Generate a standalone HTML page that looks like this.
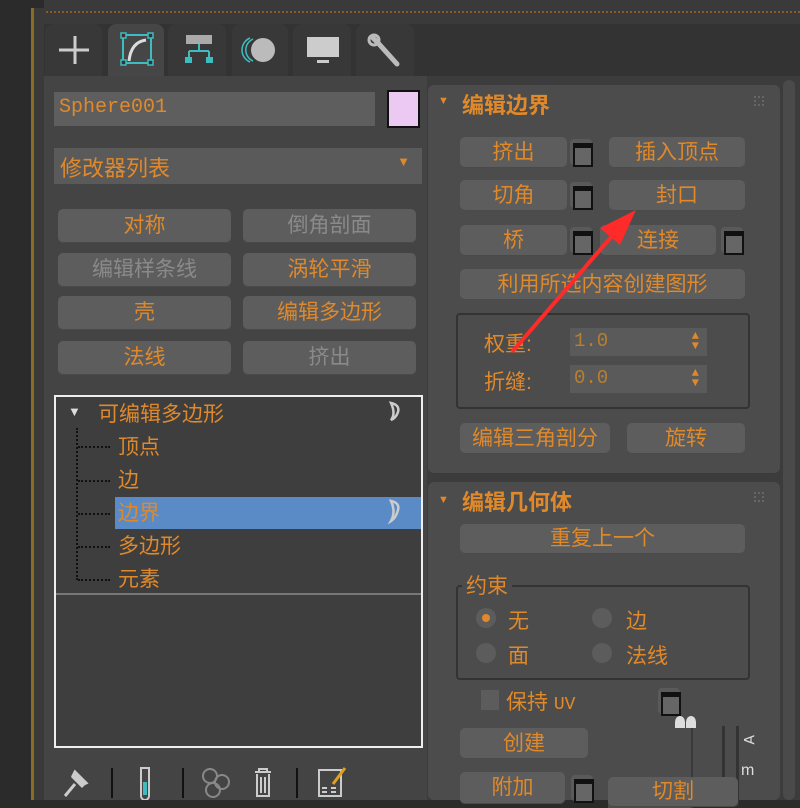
<!DOCTYPE html>
<html><head><meta charset="utf-8"><style>
*{margin:0;padding:0;box-sizing:border-box}
body{width:800px;height:800px;overflow:hidden;background:#2b2b2b;position:relative;font-family:"Liberation Sans","Noto Sans CJK SC",sans-serif;}
.a{position:absolute}
.o{color:#e0892a}
.btn{position:absolute;background:#5d5d5d;border-radius:5px;color:#e0892a;font-size:21px;text-align:center;box-shadow:inset 0 -1px 0 #4a4a4a}
.dis{color:#8a8a8a}
.sb{position:absolute;width:22px;height:26px;background:#5a5a5a;border-radius:4px}
.sb::after{content:"";position:absolute;left:3px;top:4px;width:16px;height:17px;border:2px solid #111;border-top-width:5px;background:#666}
.t{position:absolute;font-size:21px;color:#e0892a}
.tab{position:absolute;top:24px;height:52px;background:#383838;border-radius:8px 8px 0 0}
.radio{position:absolute;width:20px;height:20px;border-radius:50%;background:#5c5c5c}
</style></head><body>
<!-- left gold line -->
<div class="a" style="left:31px;top:8px;width:3px;height:792px;background:#8a6d1e"></div>
<div class="a" style="left:34px;top:8px;width:10px;height:792px;background:#3a3a3a"></div>
<div class="a" style="left:44px;top:0;width:756px;height:24px;background:#3a3a3a"></div>
<div class="a" style="left:46px;top:11px;width:754px;height:0;border-top:2px dotted #8a5a2a"></div>
<!-- tabs -->
<div class="a" style="left:44px;top:24px;width:756px;height:52px;background:#333"></div>
<div class="tab" style="left:45px;width:57px"></div>
<div class="tab" style="left:108px;width:56px;background:#464646;height:54px"></div>
<div class="tab" style="left:168px;width:58px"></div>
<div class="tab" style="left:232px;width:56px"></div>
<div class="tab" style="left:293px;width:58px"></div>
<div class="tab" style="left:356px;width:58px"></div>
<svg class="a" style="left:45px;top:24px" width="380" height="52">
<path d="M30 12V40M14 26H44" stroke="#ccc" stroke-width="3"/>
<rect x="78" y="11" width="28" height="28" fill="none" stroke="#3fbcc0" stroke-width="2"/>
<rect x="76" y="9" width="5" height="5" fill="#333" stroke="#3fbcc0" stroke-width="1.5"/><rect x="103" y="9" width="5" height="5" fill="#333" stroke="#3fbcc0" stroke-width="1.5"/><rect x="76" y="36" width="5" height="5" fill="#333" stroke="#3fbcc0" stroke-width="1.5"/><rect x="103" y="36" width="5" height="5" fill="#333" stroke="#3fbcc0" stroke-width="1.5"/>
<path d="M84 37Q86 18 101 16" stroke="#ddd" stroke-width="3" fill="none"/>
<rect x="141" y="11" width="26" height="9" fill="#aaa"/><path d="M154 20V27M144 27H164M144 27V34M164 27V34" stroke="#3fbcc0" stroke-width="2" fill="none"/><rect x="140" y="33" width="7" height="6" fill="#3fbcc0"/><rect x="161" y="33" width="7" height="6" fill="#3fbcc0"/>
<path d="M205 14A13 13 0 0 0 205 38M208 15A12 12 0 0 0 208 37" stroke="#3fbcc0" stroke-width="1.5" fill="none"/><circle cx="218" cy="26" r="12" fill="#bbb"/>
<rect x="262" y="13" width="32" height="20" fill="#ccc"/><rect x="272" y="36" width="12" height="3" fill="#ccc"/>
<path d="M328 14l6 6l18 20" stroke="#bbb" stroke-width="5" stroke-linecap="round" fill="none"/><circle cx="329" cy="16" r="5" fill="none" stroke="#bbb" stroke-width="3"/>
</svg>
<!-- left panel -->
<div class="a" style="left:44px;top:76px;width:383px;height:724px;background:#444"></div>
<div class="a" style="left:54px;top:92px;width:321px;height:34px;background:#5e5e5e;color:#e0892a;font:20px 'Liberation Mono',monospace;padding:4px 5px">Sphere001</div>
<div class="a" style="left:387px;top:90px;width:33px;height:38px;background:#ecc9f2;border:2px solid #111"></div>
<div class="a" style="left:54px;top:148px;width:368px;height:36px;background:#5a5a5a;color:#e0892a;font-size:22px;padding:3px 6px">修改器列表<span style="position:absolute;right:12px;top:6px;font-size:13px">▼</span></div>
<div class="btn" style="left:58px;top:209px;width:173px;height:34px;line-height:34px">对称</div>
<div class="btn dis" style="left:243px;top:209px;width:173px;height:34px;line-height:34px">倒角剖面</div>
<div class="btn dis" style="left:58px;top:253px;width:173px;height:34px;line-height:34px">编辑样条线</div>
<div class="btn" style="left:243px;top:253px;width:173px;height:34px;line-height:34px">涡轮平滑</div>
<div class="btn" style="left:58px;top:296px;width:173px;height:34px;line-height:34px">壳</div>
<div class="btn" style="left:243px;top:296px;width:173px;height:34px;line-height:34px">编辑多边形</div>
<div class="btn" style="left:58px;top:341px;width:173px;height:34px;line-height:34px">法线</div>
<div class="btn dis" style="left:243px;top:341px;width:173px;height:34px;line-height:34px">挤出</div>
<!-- stack -->
<div class="a" style="left:54px;top:395px;width:369px;height:353px;border:2px solid #eee;background:#3e3e3e"></div>
<div class="a" style="left:56px;top:593px;width:365px;height:2px;background:#777"></div>
<div class="a" style="left:115px;top:497px;width:306px;height:32px;background:#5b8bc6"></div>
<div class="a" style="left:68px;top:404px;color:#ddd;font-size:13px">▼</div>
<div class="t" style="left:98px;top:398px">可编辑多边形</div>
<div class="t" style="left:118px;top:431px">顶点</div>
<div class="t" style="left:118px;top:464px">边</div>
<div class="t" style="left:118px;top:497px">边界</div>
<div class="t" style="left:118px;top:530px">多边形</div>
<div class="t" style="left:118px;top:563px">元素</div>
<div class="a" style="left:76px;top:428px;height:152px;border-left:2px dotted #111"></div>
<div class="a" style="left:78px;top:446px;width:32px;border-top:2px dotted #111"></div>
<div class="a" style="left:78px;top:480px;width:32px;border-top:2px dotted #111"></div>
<div class="a" style="left:78px;top:513px;width:32px;border-top:2px dotted #111"></div>
<div class="a" style="left:78px;top:546px;width:32px;border-top:2px dotted #111"></div>
<div class="a" style="left:78px;top:579px;width:32px;border-top:2px dotted #111"></div>
<svg class="a" style="left:386px;top:400px" width="20" height="130"><path d="M5 3Q14 5 12 12Q10 18 5 20Q10 14 5 3Z" fill="none" stroke="#ccc" stroke-width="2.5"/><path d="M5 101Q14 103 12 110Q10 118 5 121Q10 112 5 101Z" fill="none" stroke="#ccc" stroke-width="2.5"/></svg>
<!-- bottom icons -->
<svg class="a" style="left:55px;top:760px" width="300" height="40">
<path d="M10 36L20 24M17 16L28 27M20 12l11 11l-4 2l-9-9z" stroke="#ccc" stroke-width="3" fill="#ccc"/>
<rect x="56" y="8" width="2" height="30" fill="#111"/>
<path d="M86 8v28a4 4 0 0 0 8 0V8z" fill="none" stroke="#ccc" stroke-width="2"/><rect x="88" y="22" width="4" height="13" fill="#3fbcc0"/>
<rect x="127" y="8" width="2" height="30" fill="#111"/>
<circle cx="155" cy="16" r="7" fill="none" stroke="#888" stroke-width="2"/><circle cx="167" cy="22" r="7" fill="none" stroke="#888" stroke-width="2"/><circle cx="158" cy="30" r="7" fill="none" stroke="#888" stroke-width="2"/>
<path d="M200 12h16M204 12v-3h8v3M202 14v22h12V14M206 17v16M210 17v16" stroke="#ccc" stroke-width="2" fill="none"/>
<rect x="241" y="8" width="2" height="30" fill="#111"/>
<rect x="264" y="10" width="22" height="26" fill="none" stroke="#ccc" stroke-width="2"/><path d="M267 28h5M267 32h5M276 28h5M276 32h5" stroke="#ccc" stroke-width="2"/><path d="M278 24L290 8" stroke="#e0a020" stroke-width="3"/>
</svg>
<!-- right rollouts -->
<div class="a" style="left:427px;top:76px;width:373px;height:724px;background:#3c3c3c"></div>
<div class="a" style="left:783px;top:80px;width:12px;height:720px;background:#4a4a4a;border-radius:6px"></div>
<div class="a" style="left:428px;top:85px;width:352px;height:388px;background:#4c4c4c;border-radius:6px"></div>
<div class="a" style="left:428px;top:482px;width:352px;height:318px;background:#4c4c4c;border-radius:6px"></div>
<div class="a o" style="left:438px;top:95px;font-size:11px">▼</div>
<div class="t" style="left:462px;top:88px;font-weight:bold;font-size:22px">编辑边界</div>
<div class="a" style="left:754px;top:96px;width:10px;height:10px;border:2px dotted #666"></div>
<div class="btn" style="left:460px;top:137px;width:107px;height:31px;line-height:31px">挤出</div>
<div class="sb" style="left:570px;top:139px"></div>
<div class="btn" style="left:609px;top:137px;width:136px;height:31px;line-height:31px">插入顶点</div>
<div class="btn" style="left:460px;top:180px;width:107px;height:31px;line-height:31px">切角</div>
<div class="sb" style="left:570px;top:182px"></div>
<div class="btn" style="left:609px;top:180px;width:136px;height:31px;line-height:31px">封口</div>
<div class="btn" style="left:460px;top:225px;width:107px;height:31px;line-height:31px">桥</div>
<div class="sb" style="left:570px;top:227px"></div>
<div class="btn" style="left:600px;top:225px;width:116px;height:31px;line-height:31px">连接</div>
<div class="sb" style="left:721px;top:227px"></div>
<div class="btn" style="left:460px;top:269px;width:285px;height:31px;line-height:31px">利用所选内容创建图形</div>
<div class="a" style="left:456px;top:313px;width:294px;height:96px;border:2px solid #333;border-radius:4px"></div>
<div class="t" style="left:484px;top:328px">权重:</div>
<div class="t" style="left:484px;top:366px">折缝:</div>
<div class="a" style="left:570px;top:328px;width:137px;height:28px;background:#5a5a5a;color:#b8802e;font:19px 'Liberation Mono',monospace;padding:2px 4px">1.0<span style="position:absolute;right:8px;top:3px;font-size:12px;line-height:10px;color:#e0892a">▲<br>▼</span></div>
<div class="a" style="left:570px;top:365px;width:137px;height:28px;background:#5a5a5a;color:#b8802e;font:19px 'Liberation Mono',monospace;padding:2px 4px">0.0<span style="position:absolute;right:8px;top:3px;font-size:12px;line-height:10px;color:#e0892a">▲<br>▼</span></div>
<div class="btn" style="left:460px;top:423px;width:150px;height:31px;line-height:31px">编辑三角剖分</div>
<div class="btn" style="left:627px;top:423px;width:118px;height:31px;line-height:31px">旋转</div>
<div class="a o" style="left:438px;top:494px;font-size:11px">▼</div>
<div class="t" style="left:462px;top:485px;font-weight:bold;font-size:22px">编辑几何体</div>
<div class="a" style="left:754px;top:492px;width:10px;height:10px;border:2px dotted #666"></div>
<div class="btn" style="left:460px;top:524px;width:285px;height:30px;line-height:30px">重复上一个</div>
<div class="a" style="left:456px;top:585px;width:294px;height:95px;border:2px solid #333;border-radius:4px"></div>
<div class="t" style="left:462px;top:570px;background:#4c4c4c;padding:0 4px">约束</div>
<div class="radio" style="left:476px;top:608px"></div><div class="a" style="left:482px;top:614px;width:8px;height:8px;border-radius:50%;background:#e0892a"></div>
<div class="t" style="left:508px;top:605px">无</div>
<div class="radio" style="left:592px;top:608px"></div><div class="t" style="left:626px;top:605px">边</div>
<div class="radio" style="left:476px;top:643px"></div><div class="t" style="left:508px;top:640px">面</div>
<div class="radio" style="left:592px;top:643px"></div><div class="t" style="left:626px;top:640px">法线</div>
<div class="a" style="left:481px;top:690px;width:18px;height:20px;background:#5c5c5c"></div>
<div class="t" style="left:506px;top:686px">保持 <span style="font-family:'Liberation Mono';font-size:18px">UV</span></div>
<div class="sb" style="left:658px;top:688px"></div>
<div class="a" style="left:675px;top:716px;width:10px;height:12px;border-radius:50% 50% 0 0;background:#ddd"></div>
<div class="a" style="left:686px;top:716px;width:10px;height:12px;border-radius:50% 50% 0 0;background:#ddd"></div>
<div class="btn" style="left:460px;top:728px;width:128px;height:31px;line-height:31px">创建</div>
<div class="a" style="left:608px;top:728px;width:85px;height:80px;background:#4c4c4c;border-right:2px solid #3a3a3a"></div>
<div class="a" style="left:722px;top:726px;width:3px;height:80px;background:#333"></div>
<div class="a" style="left:736px;top:726px;width:3px;height:80px;background:#333"></div>
<div class="a" style="left:741px;top:735px;color:#ddd;font-size:14px;writing-mode:vertical-rl">Ɐ</div>
<div class="a" style="left:741px;top:762px;color:#ddd;font-size:16px">m</div>
<div class="btn" style="left:460px;top:772px;width:105px;height:32px;line-height:32px">附加</div>
<div class="sb" style="left:571px;top:775px"></div>
<div class="btn" style="left:608px;top:777px;width:130px;height:30px;line-height:30px">切割</div>
<!-- red arrow -->
<svg class="a" style="left:0;top:0" width="800" height="800"><path d="M512 352L612 236" stroke="#ff2a2a" stroke-width="4"/><path d="M636 210L600 228L620 245Z" fill="#ff2a2a"/></svg>
</body></html>
